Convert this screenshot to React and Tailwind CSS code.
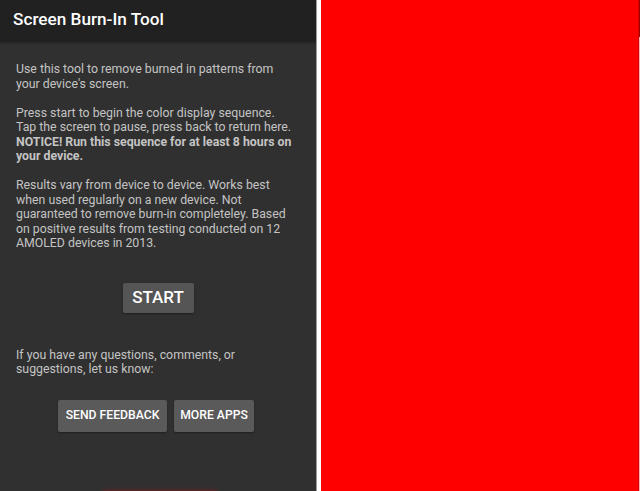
import React from 'react'

const FONT = { fontFamily: 'Roboto, "Noto Sans", "Liberation Sans", sans-serif' }

function GreyButton({ children, className = '' }) {
  return (
    <button className={`bg-[#5a5a5a] text-white font-medium rounded-[2px] shadow-[0_1px_2px_rgba(0,0,0,0.35)] ${className}`}>
      {children}
    </button>
  )
}

export default function App() {
  return (
    <div className="w-[640px] h-[491px] flex overflow-hidden bg-white" style={FONT}>
      {/* Tool panel */}
      <div className="relative w-[316px] h-full bg-[#303030] flex flex-col overflow-hidden">
        <div className="h-[42px] shrink-0 bg-[#212121] flex items-center px-[13px] shadow-[0_1px_3px_rgba(0,0,0,0.3)]">
          <h1 className="text-white text-[17.2px] font-medium -mt-[3px]">Screen Burn-In Tool</h1>
        </div>

        <div className="ml-[16px] w-[280px] pt-[20px] text-[12.3px] leading-[14.5px] text-[#c4c4c4]">
          <p>Use this tool to remove burned in patterns from your device's screen.</p>
          <p className="mt-[14.5px]">
            Press start to begin the color display sequence.<br />
            Tap the screen to pause, press back to return here.{' '}
            <span className="font-bold">NOTICE! Run this sequence for at least 8 hours on your device.</span>
          </p>
          <p className="mt-[14.5px]">
            Results vary from device to device. Works best when used regularly on a new device. Not guaranteed to remove burn-in completeley. Based on positive results from testing conducted on 12 AMOLED devices in 2013.
          </p>
        </div>

        <div className="flex justify-center mt-[32px]">
          <GreyButton className="w-[71px] h-[30px] text-[17px] bg-[#555555]">START</GreyButton>
        </div>

        <p className="ml-[16px] w-[280px] mt-[35px] text-[12.3px] leading-[14.5px] text-[#c4c4c4]">
          If you have any questions, comments, or suggestions, let us know:
        </p>

        <div className="flex gap-[7px] pl-[58px] mt-[23px]">
          <GreyButton className="w-[109px] h-[32px] text-[12.2px]">SEND FEEDBACK</GreyButton>
          <GreyButton className="w-[80px] h-[32px] text-[12.2px]">MORE APPS</GreyButton>
        </div>

        {/* red element peeking at the bottom edge */}
        <div className="absolute left-[102px] bottom-[-5px] w-[116px] h-[6px] rounded-full bg-[#6a2222] blur-[2px]" />
      </div>

      {/* Divider */}
      <div className="w-px h-full bg-[#9a9a9a]" />
      <div className="w-[4px] h-full bg-white" />

      {/* Colour display */}
      <div className="flex-1 h-full bg-[#ff0000]" />
      <div className="w-px h-full bg-[#d80000]" />
      <div className="w-px h-full flex flex-col">
        <div className="h-[37px] bg-[#a00000]" />
        <div className="flex-1 bg-[#ffb0b0]" />
      </div>
    </div>
  )
}
